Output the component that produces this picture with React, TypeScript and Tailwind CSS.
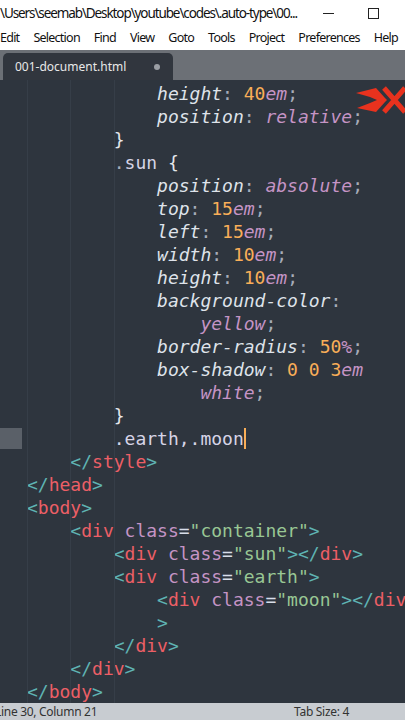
import React from "react";

type Tok = [string, string];

const C = {
  prop: "italic text-[#dfe3ea]",
  punct: "text-[#a6acb9]",
  num: "text-[#f9ae58]",
  val: "italic text-[#c594c5]",
  sel: "text-[#d6d4e6]",
  brace: "text-[#e4e7ec]",
  tp: "text-[#5fb3b3]",
  tag: "text-[#ec5f66]",
  attr: "text-[#c594c5]",
  eq: "text-[#d8dee9]",
  str: "text-[#99c794]",
};

const sp = (n: number): Tok => [" ".repeat(n * 4), ""];

const prop = (lvl: number, name: string, rest: Tok[]): Tok[] => [
  sp(lvl),
  [name, C.prop],
  [": ", C.punct],
  ...rest,
];

const open = (lvl: number, name: string, cls?: string, close?: boolean): Tok[] => {
  const t: Tok[] = [sp(lvl), ["<", C.tp], [name, C.tag]];
  if (cls) {
    t.push([" ", ""], ["class", C.attr], ["=", C.eq], ['"' + cls + '"', C.str]);
  }
  t.push([">", C.tp]);
  if (close) t.push(["</", C.tp], [name, C.tag]);
  return t;
};

const closeTag = (lvl: number, name: string): Tok[] => [sp(lvl), ["</", C.tp], [name, C.tag], [">", C.tp]];

const lines: Tok[][] = [
  prop(3, "height", [["40", C.num], ["em", C.val], [";", C.punct]]),
  prop(3, "position", [["relative", C.val], [";", C.punct]]),
  [sp(2), ["}", C.brace]],
  [sp(2), [".", C.punct], ["sun", C.sel], [" {", C.brace]],
  prop(3, "position", [["absolute", C.val], [";", C.punct]]),
  prop(3, "top", [["15", C.num], ["em", C.val], [";", C.punct]]),
  prop(3, "left", [["15", C.num], ["em", C.val], [";", C.punct]]),
  prop(3, "width", [["10", C.num], ["em", C.val], [";", C.punct]]),
  prop(3, "height", [["10", C.num], ["em", C.val], [";", C.punct]]),
  [sp(3), ["background-color", C.prop], [":", C.punct]],
  [sp(4), ["yellow", C.val], [";", C.punct]],
  prop(3, "border-radius", [["50", C.num], ["%", C.val], [";", C.punct]]),
  prop(3, "box-shadow", [["0 0 3", C.num], ["em", C.val]]),
  [sp(4), ["white", C.val], [";", C.punct]],
  [sp(2), ["}", C.brace]],
  [sp(2), [".earth,.moon", C.sel], ["|", "cursor"]],
  closeTag(1, "style"),
  closeTag(0, "head"),
  open(0, "body"),
  open(1, "div", "container"),
  [...open(2, "div", "sun", true), [">", C.tp]],
  open(2, "div", "earth"),
  [...open(3, "div", "moon", true), [">", C.tp]],
  [sp(3), [">", C.tp]],
  closeTag(2, "div"),
  closeTag(1, "div"),
  closeTag(0, "body"),
];

// red "X" mark in the top right corner of the editor
function Logo() {
  return (
    <svg width="50" height="30" viewBox="0 0 50 30" className="absolute right-0 top-[5px]">
      <path d="M1 8 L21 3 L30 13 L32 15 L30 17 L21 27 L2 23 L15 18 L22 15 L15 12 Z" fill="#e8321e" />
      <path d="M29 3 L50 27 M50 3 L29 27" stroke="#e8321e" strokeWidth="5" fill="none" />
    </svg>
  );
}

export default function App() {
  return (
    <div className="w-[405px] h-[720px] overflow-hidden flex flex-col bg-white font-['Noto_Sans',sans-serif]">
      <div className="h-[26px] flex items-center bg-white text-[#111] shrink-0">
        <div className="text-[13.5px] whitespace-nowrap tracking-[-1.1px] w-[318px] overflow-hidden">
          \Users\seemab\Desktop\youtube\codes\.auto-type\00...
        </div>
        <div className="w-[11px] h-px bg-[#222] ml-[5px]" />
        <div className="w-[11px] h-[11px] border border-[#222] ml-[34px]" />
      </div>
      <div className="h-[24px] flex items-center gap-[14px] text-[12.5px] tracking-[-0.75px] text-[#111] whitespace-nowrap shrink-0">
        {["Edit", "Selection", "Find", "View", "Goto", "Tools", "Project", "Preferences", "Help"].map((m) => (
          <span key={m}>{m}</span>
        ))}
      </div>
      <div className="h-[30px] bg-[#6c7076] flex items-end pl-[3px] shrink-0">
        <div className="w-[170px] h-[27px] bg-[#31363e] rounded-t-[5px] flex items-center justify-between pl-[12px] pr-[13px]">
          <span className="text-[12px] text-[#e8e8e8]">001-document.html</span>
          <span className="w-[6px] h-[6px] rounded-full bg-[#9a9ea4]" />
        </div>
      </div>
      <div className="relative flex-1 bg-[#2e353e] overflow-hidden pt-[2px] font-['DejaVu_Sans_Mono',monospace] text-[18px]">
        <div className="absolute top-0 bottom-0 left-[27px] w-px bg-[#363e48]" />
        <div className="absolute top-0 bottom-0 left-[70px] w-px bg-[#363e48]" />
        <div className="absolute top-0 bottom-0 left-[114px] w-px bg-[#363e48]" />
        <Logo />
        {lines.map((toks, i) => (
          <div key={i} className="h-[23px] leading-[23px] flex whitespace-pre">
            <div className="w-[27px] shrink-0 flex items-center">
              {i === 15 && <div className="w-[22px] h-[21px] bg-[#5a6068]" />}
            </div>
            <div className="flex items-center">
              {toks.map(([t, c], j) =>
                c === "cursor" ? (
                  <span key={j} className="inline-block w-[2px] h-[21px] bg-[#f9ae58]" />
                ) : (
                  <span key={j} className={c}>
                    {t}
                  </span>
                )
              )}
            </div>
          </div>
        ))}
      </div>
      <div className="h-[17px] bg-[#c8ccd1] flex items-center justify-between text-[12px] tracking-[-0.3px] text-[#333] shrink-0 whitespace-nowrap">
        <span className="-ml-[5px]">Line 30, Column 21</span>
        <span className="mr-[56px]">Tab Size: 4</span>
      </div>
    </div>
  );
}
